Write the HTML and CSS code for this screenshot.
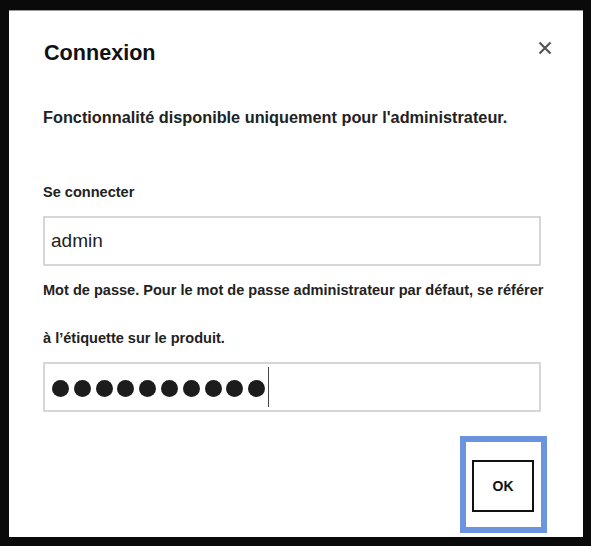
FILE: index.html
```html
<!DOCTYPE html>
<html lang="fr">
<head>
<meta charset="utf-8">
<title>Connexion</title>
<link rel="stylesheet" href="styles.css">
</head>
<body>
<div class="dialog">
  <div class="header">
    <h1 class="title">Connexion</h1>
    <button class="close" aria-label="Fermer">
      <svg width="14" height="14" viewBox="0 0 14 14"><path d="M1.5 1.5 L12.5 12.5 M12.5 1.5 L1.5 12.5" stroke="#555" stroke-width="2.2" fill="none"/></svg>
    </button>
  </div>
  <p class="desc">Fonctionnalité disponible uniquement pour l'administrateur.</p>
  <div class="label">Se connecter</div>
  <div class="field">admin</div>
  <div class="label">Mot de passe. Pour le mot de passe administrateur par défaut, se référer<br>à l’étiquette sur le produit.</div>
  <div class="field pw" aria-label="mot de passe">
    <span class="dot"></span><span class="dot"></span><span class="dot"></span><span class="dot"></span><span class="dot"></span><span class="dot"></span><span class="dot"></span><span class="dot"></span><span class="dot"></span><span class="dot"></span><span class="caret"></span>
  </div>
  <div class="actions">
    <div class="focus"><button class="ok">OK</button></div>
  </div>
</div>
</body>
</html>
```
FILE: styles.css
```css
html, body {
  margin: 0;
  background: #0a0a0a;
}
body {
  padding: 10px 8px 9px 9px;
  font-family: "Liberation Sans", Arial, sans-serif;
  color: #222;
}
.dialog {
  box-sizing: border-box;
  width: 574px;
  height: 527px;
  background: #fff;
  border-top: 1px solid #9a9a9a;
  padding: 30px 36px 0 34px;
}
.header {
  display: flex;
  justify-content: space-between;
  align-items: flex-start;
}
.title {
  margin: 0 0 0 1px;
  font-size: 21.6px;
  line-height: 24px;
  font-weight: bold;
  color: #111;
}
.close {
  border: 0;
  background: none;
  padding: 0;
  margin: 0 -5px 0 0;
  width: 14px;
  height: 14px;
  display: block;
  position: relative;
  top: 0;
}
.close svg { display: block; }
.desc {
  margin: 42px 0 0;
  font-size: 16.3px;
  line-height: 20px;
  font-weight: bold;
}
.label {
  margin-top: 0;
  font-size: 14.55px;
  line-height: 48px;
  font-weight: bold;
}
.desc + .label { margin-top: 41px; }
.field {
  box-sizing: border-box;
  width: 498px;
  height: 50px;
  border: 2px solid #d6d6d6;
  padding: 0 6px;
  font-size: 19px;
  line-height: 46px;
  color: #222;
}
.pw {
  display: flex;
  align-items: center;
  padding-left: 7px;
}
.dot {
  width: 17px;
  height: 17px;
  border-radius: 50%;
  background: #1c1c1c;
  margin-right: 4.8px;
  margin-top: 3px;
}
.dot:nth-child(10) { margin-right: 3px; }
.caret {
  width: 1px;
  height: 40px;
  background: #444;
}
.actions {
  display: flex;
  justify-content: flex-end;
  margin-top: 24px;
}
.focus {
  border: 6px solid #6b93e0;
  padding: 18px 7px 15px 6px;
}
.ok {
  box-sizing: border-box;
  width: 62px;
  height: 52px;
  border: 2px solid #111;
  background: #fff;
  font-family: "Liberation Sans", Arial, sans-serif;
  font-size: 14px;
  font-weight: bold;
  color: #111;
  padding: 0;
  display: block;
}
```
